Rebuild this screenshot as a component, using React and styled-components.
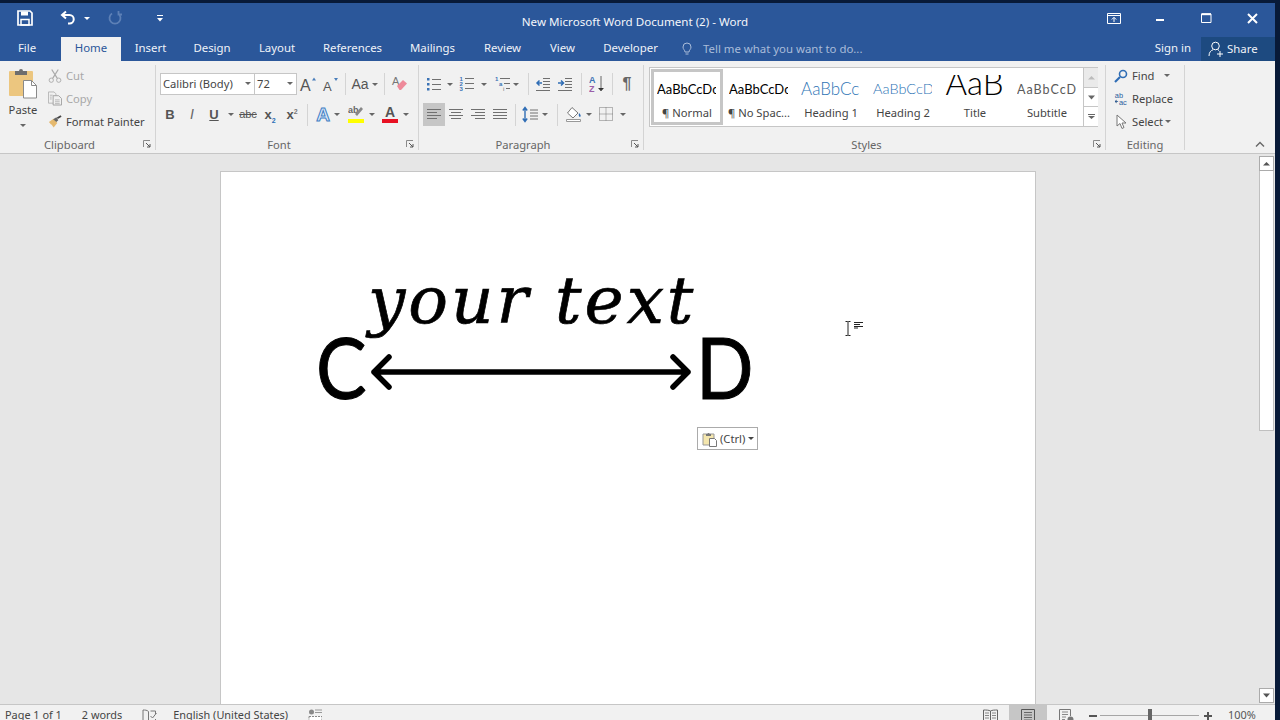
import React from "react";
import styled, { createGlobalStyle } from "styled-components";

const Global = createGlobalStyle`
  html, body {
    margin: 0;
    height: 100%;
    overflow: hidden;
    background: #081a38;
  }
  #root {
    height: 100%;
  }
`;

const UI = `"Noto Sans", "Open Sans", sans-serif`;

const Screen = styled.div`
  width: 1280px;
  height: 720px;
  padding: 3px 5px 0 0;
  box-sizing: border-box;
  overflow: hidden;
  font-family: ${UI};
`;
const Win = styled.div`
  display: flex;
  flex-direction: column;
  width: 1275px;
  height: 739px;
`;

/* title bar */
const TitleBar = styled.div`
  display: grid;
  grid-template-columns: 1fr auto 1fr;
  height: 34px;
  background: #2b579a;
  color: #fff;
`;
const Qat = styled.div`
  display: flex;
  align-items: center;
  height: 30px;
  padding-left: 14px;
`;
const DocTitle = styled.div`
  margin-right: 5px;
  font-size: 11.6px;
  line-height: 37px;
  color: #f4f6fa;
`;
const WinButtons = styled.div`
  display: flex;
  justify-content: flex-end;
  height: 30px;
`;
const WinBtn = styled.div`
  display: flex;
  align-items: center;
  justify-content: center;
  width: ${(p) => p.$w || 46}px;
`;

/* tabs */
const TabRow = styled.div`
  display: flex;
  height: 24px;
  background: #2b579a;
  font-size: 11.4px;
  line-height: 22px;
  color: #f0f3f8;
`;
const Tab = styled.div`
  width: ${(p) => p.$w}px;
  margin-right: ${(p) => p.$mr || 0}px;
  text-align: center;
  background: ${(p) => (p.$on ? "#f1f1f1" : "transparent")};
  color: ${(p) => (p.$on ? "#2b579a" : "inherit")};
`;
const TellMe = styled.div`
  display: flex;
  align-items: center;
  gap: 11px;
  margin-left: 11px;
  color: #a9bcd9;
`;
const SignIn = styled.div`
  margin-left: auto;
  margin-right: 10px;
`;
const ShareBtn = styled.div`
  display: flex;
  align-items: center;
  gap: 3px;
  width: 74px;
  padding-left: 7px;
  box-sizing: border-box;
  background: #1d4a80;
`;

/* ribbon */
const Ribbon = styled.div`
  display: flex;
  height: 93px;
  box-sizing: border-box;
  padding-top: 4px;
  background: #f1f1f1;
  border-bottom: 1px solid #c6c6c6;
  font-size: 11.2px;
  color: #444;
`;
const Group = styled.div`
  display: flex;
  flex-direction: column;
  flex: none;
  width: ${(p) => p.$w}px;
  height: 85px;
  box-sizing: border-box;
  border-right: 1px solid #d4d4d4;
`;
const GroupBody = styled.div`
  display: flex;
  height: 72px;
  flex: none;
  box-sizing: border-box;
`;
const GroupFoot = styled.div`
  display: flex;
  align-items: center;
  height: 14px;
  color: #666;
`;
const FootLabel = styled.div`
  flex: 1;
  text-align: center;
`;
const Launcher = styled.div`
  display: flex;
  justify-content: center;
  width: 16px;
`;
const Collapse = styled.div`
  margin-left: auto;
  margin-right: 10px;
  align-self: flex-end;
  padding-bottom: 2px;
`;
const PasteCol = styled.div`
  display: flex;
  flex-direction: column;
  align-items: center;
  width: 46px;
  flex: none;
  padding-top: 2px;
  margin-right: 2px;
`;
const PasteLabel = styled.div`
  margin-top: 3px;
  line-height: 16px;
`;
const SmallCol = styled.div`
  display: flex;
  flex-direction: column;
  margin-top: -1px;
  margin-left: ${(p) => p.$ml || 0}px;
`;
const SmallBtn = styled.div`
  display: flex;
  align-items: center;
  gap: 4px;
  height: 23px;
  white-space: nowrap;
  color: ${(p) => (p.$off ? "#a8a8a8" : "inherit")};
`;
const IconBox = styled.span`
  display: flex;
  justify-content: center;
  width: 14px;
`;
const Rows = styled.div`
  display: flex;
  flex-direction: column;
  gap: 8px;
  padding: 8px 0 0 ${(p) => p.$l}px;
`;
const Row = styled.div`
  display: flex;
  align-items: center;
  height: ${(p) => p.$h || 22}px;
  margin-left: ${(p) => p.$ml || 0}px;
`;
const Combo = styled.div`
  display: flex;
  align-items: center;
  width: ${(p) => p.$w}px;
  height: 22px;
  margin-right: ${(p) => p.$mr || 0}px;
  padding: 0 0 2px 2px;
  box-sizing: border-box;
  background: #fff;
  border: 1px solid #c6c6c6;
  font-size: 11.2px;
  color: #444;
`;
const ComboText = styled.span`
  flex: 1;
`;
const Tool = styled.div`
  display: flex;
  align-items: center;
  justify-content: center;
  flex: none;
  width: ${(p) => p.$w || 22}px;
  height: 100%;
  margin-left: ${(p) => p.$ml || 0}px;
  padding-bottom: 1px;
  box-sizing: border-box;
  background: ${(p) => (p.$on ? "#c6c6c6" : "transparent")};
  color: #555;
`;
const Caret = styled.i`
  display: flex;
  align-items: center;
  justify-content: center;
  flex: none;
  width: ${(p) => p.$w || 10}px;
  margin: ${(p) => p.$mt || 0}px ${(p) => p.$after || 0}px 0 ${(p) => p.$ml || 0}px;
  height: 6px;
  &::after {
    content: "";
    border: 3px solid transparent;
    border-bottom: 0;
    border-top-color: ${(p) => p.$color || "#666"};
  }
`;
const Sep = styled.div`
  flex: none;
  width: 1px;
  height: 22px;
  margin: 0 ${(p) => p.$r}px 0 ${(p) => p.$l}px;
  background: #d4d4d4;
`;
const Glyph = styled.span`
  font-family: "Liberation Sans", sans-serif;
  font-size: ${(p) => p.$size || 13}px;
  font-weight: ${(p) => p.$weight || 400};
  font-style: ${(p) => (p.$italic ? "italic" : "normal")};
  text-decoration: ${(p) => p.$deco || "none"};
  color: ${(p) => p.$color || "#555"};
  line-height: 1;
`;
const Tiny = styled.sup`
  font-size: 7px;
  color: ${(p) => p.$color || "#2b6fb8"};
  vertical-align: ${(p) => p.$align || "baseline"};
  line-height: 0;
`;
const OutlineA = styled.span`
  font-family: "Liberation Sans", sans-serif;
  font-size: 19px;
  font-weight: 700;
  color: #dceafa;
  -webkit-text-stroke: 1px #3f7fc4;
  line-height: 1;
`;
const BarLetter = styled.div`
  display: flex;
  flex-direction: column;
  align-items: center;
  width: 16px;
  font-family: "Liberation Sans", sans-serif;
  font-size: ${(p) => p.$size || 14}px;
  font-weight: 700;
  line-height: 13px;
  color: #555;
  &::after {
    content: "";
    width: 16px;
    height: 4px;
    background: ${(p) => p.$bar};
  }
`;

/* style gallery */
const Gallery = styled.div`
  display: flex;
  width: 449px;
  height: 60px;
  margin: 2px 0 0 5px;
  box-sizing: border-box;
  padding: 1px 0 1px 1px;
  background: #fff;
  border: 1px solid #c6c6c6;
`;
const StyleTile = styled.div`
  display: flex;
  flex-direction: column;
  width: 72px;
  flex: none;
  box-sizing: border-box;
  border: 3px solid ${(p) => (p.$on ? "#c6c6c6" : "transparent")};
`;
const Sample = styled.div`
  display: flex;
  align-items: flex-end;
  justify-content: ${(p) => (p.$clip ? "flex-start" : "center")};
  height: 25px;
  margin: 3px 4px 0 3px;
  padding-bottom: ${(p) => (p.$pad === undefined ? 4 : p.$pad)}px;
  box-sizing: border-box;
  overflow: hidden;
  white-space: nowrap;
  font-family: Lato, sans-serif;
  font-size: ${(p) => p.$size || 13}px;
  font-weight: ${(p) => p.$weight || 400};
  letter-spacing: ${(p) => p.$ls || 0}px;
  line-height: 1;
  color: ${(p) => p.$color || "#000"};
`;
const TileLabel = styled.div`
  margin-top: 5px;
  text-align: center;
  white-space: nowrap;
  line-height: 16px;
`;
const GalleryScroll = styled.div`
  display: flex;
  flex-direction: column;
  width: 15px;
  flex: none;
  margin: -1px 0;
`;
const GalleryBtn = styled.div`
  display: flex;
  align-items: center;
  justify-content: center;
  flex: 1;
  border-left: 1px solid #c6c6c6;
  border-top: ${(p) => (p.$first ? "0" : "1px solid #c6c6c6")};
  background: ${(p) => (p.$off ? "#eaeaea" : "#fff")};
`;

/* document area */
const DocArea = styled.div`
  display: flex;
  height: 550px;
  background: #e6e6e6;
`;
const Canvas = styled.div`
  flex: 1;
  padding: 17px 0 0 220px;
  overflow: hidden;
`;
const Page = styled.div`
  position: relative;
  width: 816px;
  height: 900px;
  box-sizing: border-box;
  padding: 95px 0 0 95px;
  background: #fff;
  border: 1px solid #c6c6c6;
`;
const Equation = styled.div`
  display: grid;
  grid-template-columns: 54px 326px auto;
  grid-template-rows: 62px 86px;
  color: #000;
`;
const OverText = styled.div`
  grid-column: 2;
  margin: 3px 0 0 -2px;
  font-family: "DejaVu Serif", serif;
  font-style: italic;
  font-size: 66px;
  letter-spacing: 3px;
  line-height: 62px;
  white-space: nowrap;
  -webkit-text-stroke: 0.7px #000;
`;
const Letter = styled.div`
  grid-row: 2;
  margin-top: -6px;
  font-family: Lato, sans-serif;
  font-size: 86px;
  line-height: 86px;
  -webkit-text-stroke: 1px #000;
  transform: scaleX(0.88);
  transform-origin: left center;
`;
const ArrowCell = styled.div`
  grid-row: 2;
  display: flex;
  align-items: center;
`;
const PasteTag = styled.div`
  position: absolute;
  left: 476px;
  top: 255px;
  display: flex;
  align-items: center;
  width: 61px;
  height: 23px;
  padding-left: 4px;
  box-sizing: border-box;
  background: #fff;
  border: 1px solid #ababab;
  font-size: 11.2px;
  color: #444;
  gap: 2px;
`;
const Pointer = styled.div`
  position: absolute;
  left: 624px;
  top: 148px;
`;
const Scrollbar = styled.div`
  display: flex;
  flex-direction: column;
  width: 16px;
  flex: none;
  padding: 2px 1px 1px 0;
  box-sizing: border-box;
`;
const ScrollBtn = styled.div`
  display: flex;
  align-items: center;
  justify-content: center;
  height: 15px;
  box-sizing: border-box;
  background: #fff;
  border: 1px solid #ababab;
`;
const Thumb = styled.div`
  height: 260px;
  box-sizing: border-box;
  background: #fff;
  border: 1px solid #c0c0c0;
  border-top: 0;
`;
const Track = styled.div`
  flex: 1;
`;

/* status bar */
const StatusBar = styled.div`
  display: flex;
  align-items: flex-start;
  height: 22px;
  box-sizing: border-box;
  border-top: 1px solid #c6c6c6;
  background: #f1f1f1;
  font-size: 10.9px;
  line-height: 19px;
  color: #444;
`;
const StatusText = styled.div`
  margin-left: ${(p) => p.$ml}px;
  white-space: nowrap;
`;
const StatusIcon = styled.div`
  display: flex;
  align-items: center;
  justify-content: center;
  width: ${(p) => p.$w || 38}px;
  height: 22px;
  margin-left: ${(p) => p.$ml || 0}px;
  background: ${(p) => (p.$on ? "#c6c6c6" : "transparent")};
`;
const ZoomWrap = styled.div`
  display: flex;
  align-items: center;
  height: 21px;
  margin-left: 4px;
  color: #555;
`;
const ZoomLine = styled.div`
  position: relative;
  width: 99px;
  height: 1px;
  margin: 0 5px 0 3px;
  background: #a6a6a6;
  &::after {
    content: "";
    position: absolute;
    left: 48px;
    top: -6px;
    width: 4px;
    height: 13px;
    background: #666;
  }
`;
const ZoomMark = styled.div`
  width: 8px;
  height: 2px;
  background: #555;
`;
const ZoomPlus = styled(ZoomMark)`
  position: relative;
  &::after {
    content: "";
    position: absolute;
    left: 3px;
    top: -3px;
    width: 2px;
    height: 8px;
    background: #555;
  }
`;
const ZoomPct = styled.div`
  margin-left: 16px;
  line-height: 19px;
  margin-top: -2px;
`;

/* drawings */
const Svg = ({ w = 16, h = 16, children }) => (
  <svg width={w} height={h} viewBox={`0 0 ${w} ${h}`} fill="none">
    {children}
  </svg>
);

const SaveIcon = () => (
  <Svg>
    <path d="M1 1h12l2 2v12H1z" stroke="#fff" strokeWidth="1.7" />
    <path d="M4 1.5h7v4H4z" fill="#fff" />
    <path d="M4 9.5h8V15H4z" stroke="#fff" strokeWidth="1.5" />
  </Svg>
);
const UndoIcon = () => (
  <Svg>
    <path
      d="M6 1.5 2 5l4 3.5M2 5h7.5a4 4 0 0 1 0 8.5H8"
      stroke="#fff"
      strokeWidth="2"
    />
  </Svg>
);
const RedoIcon = () => (
  <Svg>
    <path
      d="M5 3.5a5.5 5.5 0 1 0 6 0M11.5 1v3.5H15"
      stroke="#5d80b6"
      strokeWidth="1.8"
    />
  </Svg>
);
const QatIcon = () => (
  <Svg w={8} h={8}>
    <path d="M1 1h6v1H1z" fill="#fff" />
    <path d="M1 4h6L4 7.5z" fill="#fff" />
  </Svg>
);
const RibbonOptIcon = () => (
  <Svg w={14} h={11}>
    <path d="M.5.5h13v10H.5z" stroke="#fff" />
    <path d="M.5 2.5h13" stroke="#fff" />
    <path d="M7 9V4.5M4.8 6.5 7 4.3l2.2 2.2" stroke="#fff" />
  </Svg>
);
const MinIcon = () => (
  <Svg w={10} h={12}>
    <path d="M1 8h8" stroke="#fff" strokeWidth="2" />
  </Svg>
);
const MaxIcon = () => (
  <Svg w={11} h={10}>
    <path d="M.5 1h9.5v8.5H.5z" stroke="#fff" />
    <path d="M.5 1.2h9.5" stroke="#fff" strokeWidth="2" />
  </Svg>
);
const CloseIcon = () => (
  <Svg w={11} h={11}>
    <path d="m1 1 9 9M10 1l-9 9" stroke="#fff" strokeWidth="2" />
  </Svg>
);
const BulbIcon = () => (
  <Svg w={10} h={14}>
    <path
      d="M3 10C3 8 1 7.5 1 5a4 4 0 0 1 8 0c0 2.5-2 3-2 5z"
      stroke="#a9bcd9"
    />
    <path d="M3.5 12h3" stroke="#a9bcd9" />
  </Svg>
);
const PersonIcon = () => (
  <Svg>
    <circle cx="7.5" cy="5" r="3.8" stroke="#fff" />
    <path d="M1 15c0-4 2-5.5 4-6.2M9.5 8.5 11 9.5" stroke="#fff" />
    <path d="M9 13h6M12 10v6" stroke="#fff" />
  </Svg>
);
const PasteIcon = () => (
  <Svg w={30} h={32}>
    <path d="M1 5a1 1 0 0 1 1-1h22a1 1 0 0 1 1 1v24H2a1 1 0 0 1-1-1z" fill="#ecc67f" />
    <path d="M7 4h4a2 2 0 0 1 4 0h4v4H7z" fill="#6d6d6d" />
    <path d="M15.5 13.5h8l5 5v12.5h-13z" fill="#fff" stroke="#8a8a8a" />
    <path d="M23.5 13.5v5h5" stroke="#8a8a8a" />
  </Svg>
);
const CutIcon = () => (
  <Svg w={15} h={16}>
    <circle cx="3.5" cy="12.5" r="2.3" stroke="#aaa" />
    <circle cx="11.5" cy="12.5" r="2.3" stroke="#aaa" />
    <path d="M5 10.5 11 1M10 10.5 4 1" stroke="#aaa" strokeWidth="1.3" />
  </Svg>
);
const CopyIcon = () => (
  <Svg w={15} h={15}>
    <path d="M.5.5h6l2 2v10H.5z" stroke="#b5b5b5" fill="#f1f1f1" />
    <path d="M5.5 4.5h6l3 3v7h-9z" stroke="#a0a0a0" fill="#f1f1f1" />
    <path d="M7.5 9h5M7.5 11h5M7.5 13h5M2 4h3M2 6h2M2 8h2" stroke="#b5b5b5" />
  </Svg>
);
const BrushIcon = () => (
  <Svg w={15} h={14}>
    <path d="M1 7 6 3.5 10 8 6 13 4 10 3 9.5z" fill="#e5b96f" />
    <path d="M5.5 4 9 2l2 3-2 2z" fill="#666" />
    <path d="m10 3 4-2.500" stroke="#444" strokeWidth="2" />
  </Svg>
);
const GrowIcon = ({ big }) => (
  <svg width="18" height="18" viewBox="0 0 18 18">
    <text
      x={big ? 1 : 2}
      y="16"
      fontFamily="Liberation Sans"
      fontSize={big ? 16 : 13}
      fill="#555"
    >
      A
    </text>
    <path d={big ? "M13 5.500h4L15 2.500z" : "M13 3h4l-2 3z"} fill="#4a7ebb" />
  </svg>
);
const EraserIcon = () => (
  <svg width="18" height="18" viewBox="0 0 18 18">
    <text x="1" y="10" fontFamily="Liberation Sans" fontSize="11" fill="#777">
      A
    </text>
    <path d="m6 11 6-6 4 3.500-6 6.500H8.500z" fill="#ee8a9a" />
  </svg>
);
const HighlightIcon = () => (
  <svg width="16" height="14" viewBox="0 0 16 14">
    <text x="0" y="8" fontFamily="Liberation Sans" fontSize="9" fill="#666">
      ab
    </text>
    <path d="m7 9 6-7 2 2-6 7z" fill="#888" />
  </svg>
);
const LaunchIcon = () => (
  <Svg w={8} h={8}>
    <path d="M.5 7V.5H7" stroke="#8a8a8a" />
    <path d="M3 3l4 4M7 4v3H4" stroke="#555" />
  </Svg>
);
const ChevronUp = () => (
  <Svg w={10} h={7}>
    <path d="M1 5.500 5 1.500l4 4" stroke="#666" strokeWidth="1.4" />
  </Svg>
);
const Lines = ({ spec }) => (
  <Svg>
    {spec.map(([a, b], i) => (
      <path key={i} d={`M${a} ${3.5 + i * 3}H${b}`} stroke="#707070" />
    ))}
  </Svg>
);
const BulletsIcon = () => (
  <Svg>
    {[3, 8, 13].map((y) => (
      <React.Fragment key={y}>
        <rect x="1" y={y - 1} width="2.500" height="2.500" fill="#3b73b5" />
        <path d={`M6 ${y + 0.5}h9`} stroke="#707070" />
      </React.Fragment>
    ))}
  </Svg>
);
const NumberIcon = () => (
  <Svg>
    {[1, 2, 3].map((n) => (
      <React.Fragment key={n}>
        <text x="0.500" y={n * 5} fontSize="6" fontFamily="Liberation Sans" fontWeight="700" fill="#3b73b5">
          {n}
        </text>
        <path d={`M6 ${n * 5 - 2.5}h9`} stroke="#707070" />
      </React.Fragment>
    ))}
  </Svg>
);
const MultiIcon = () => (
  <Svg>
    <text x="0" y="5" fontSize="6" fontFamily="Liberation Sans" fontWeight="700" fill="#3b73b5">1</text>
    <text x="4" y="10" fontSize="6" fontFamily="Liberation Sans" fontWeight="700" fill="#3b73b5">a</text>
    <text x="8" y="15" fontSize="6" fontFamily="Liberation Sans" fill="#707070">i</text>
    <path d="M5 2.500h10M9 7.500h6M11 12.500h4" stroke="#707070" />
  </Svg>
);
const IndentIcon = ({ more }) => (
  <Svg>
    <path d="M8 2.500h7M8 5.500h7M8 8.500h7M8 11.500h7M1 14.500h14" stroke="#707070" />
    <path
      d={more ? "M1 7h5M4 4.500 6.500 7 4 9.500" : "M7 7H2M4.500 4.500 2 7l2.500 2.500"}
      stroke="#2f6db5"
      strokeWidth="1.500"
    />
  </Svg>
);
const SortIcon = () => (
  <svg width="16" height="18" viewBox="0 0 16 18">
    <text x="0" y="8" fontSize="9" fontFamily="Liberation Sans" fontWeight="700" fill="#3b73b5">A</text>
    <text x="0" y="17" fontSize="9" fontFamily="Liberation Sans" fontWeight="700" fill="#9b5ea8">Z</text>
    <path d="M12 1v15M9.500 13l2.500 3 2.500-3" stroke="#666" />
  </svg>
);
const SpacingIcon = () => (
  <Svg w={16} h={17}>
    <path d="M3 2v13M.8 4.500 3 1.500l2.200 3M.8 12.500 3 15.500l2.200-3" stroke="#2f6db5" strokeWidth="1.400" />
    <path d="M8 4h8M8 7h8M8 10h8M8 13h8" stroke="#707070" />
  </Svg>
);
const BucketIcon = () => (
  <Svg w={17} h={16}>
    <path d="M7 1.500 13 7l-5 5-5.500-5z" fill="#fff" stroke="#777" />
    <path d="M14 7c1.500 1.500 2 2.500 1.500 3.500S13 10.500 14 7" fill="#2f6db5" />
    <path d="M1.500 13.500h14v2h-14z" fill="#fff" stroke="#999" />
  </Svg>
);
const BordersIcon = () => (
  <Svg w={14} h={14}>
    <path
      d="M.5.500h13v13H.5zM7 .500v13M.5 7h13"
      stroke="#777"
      strokeDasharray="1 1"
    />
  </Svg>
);
const FindIcon = () => (
  <Svg w={14} h={14}>
    <circle cx="9" cy="5" r="3.500" stroke="#2f6db5" strokeWidth="1.600" />
    <path d="M6 8 1 13" stroke="#2f6db5" strokeWidth="2.200" />
  </Svg>
);
const ReplaceIcon = () => (
  <svg width="17" height="16" viewBox="0 0 17 16">
    <text x="1" y="7" fontSize="9" fontFamily="Liberation Sans" fill="#2b5f9e">ab</text>
    <text x="6" y="15" fontSize="9" fontFamily="Liberation Sans" fill="#2b5f9e">ac</text>
    <path d="M5 11H1.500M3 9.500 1.200 11 3 12.500" stroke="#2b5f9e" />
  </svg>
);
const SelectIcon = () => (
  <Svg w={11} h={16}>
    <path d="M1 1v11l3-2.500 2 5 2-1-2-4.500h4z" stroke="#777" fill="#fff" />
  </Svg>
);
const MiniArrow = ({ d, fill = "#777" }) => (
  <Svg w={7} h={5}>
    <path d={d} fill={fill} />
  </Svg>
);
const BigArrow = () => (
  <svg width="324" height="36" viewBox="0 0 324 36" fill="none">
    <path
      d="M4 18h314M19 3 4 18l15 15M303 3l15 15-15 15"
      stroke="#000"
      strokeWidth="5.500"
      strokeLinecap="round"
      strokeLinejoin="round"
    />
  </svg>
);
const PasteTagIcon = () => (
  <Svg w={16} h={16}>
    <path d="M1 3h11v11H1z" fill="#f4e6ad" stroke="#999" />
    <path d="M4 3h1.500a1 1 0 0 1 2 0H9v2H4z" fill="#777" />
    <path d="M7.500 7.500h5l2 2v6h-7z" fill="#fff" stroke="#777" />
  </Svg>
);
const CursorIcon = () => (
  <Svg w={20} h={17}>
    <path d="M.5 1.500h2l.5.500.5-.500h2M.5 15.500h2l.5-.500.5.500h2M3 2v13" stroke="#222" />
    <path d="M9 2.500h9M9 4.500h6M9 6.500h9M9 8h4" stroke="#222" />
  </Svg>
);
const ProofIcon = () => (
  <Svg w={15} h={14}>
    <path d="M6.500 2.500C5 1 3 1 1 1v11c2 0 4 0 5.500 1.500zM8.500 2h5v3M13.500 10v3.500h-5" stroke="#777" />
    <path d="m8.500 7 2 2 4-5" stroke="#777" />
  </Svg>
);
const MacroIcon = () => (
  <Svg w={14} h={14}>
    <circle cx="3.500" cy="3" r="2.500" fill="#888" />
    <path d="M7 1h7M7 3.500h7" stroke="#999" />
    <path d="M1 7.500h13v6H1z" fill="#fff" stroke="#888" strokeDasharray="2 1" />
  </Svg>
);
const ReadIcon = () => (
  <Svg w={15} h={14}>
    <path d="M7.500 2C6 1 3 1 .5 1v11c2.500 0 5.500 0 7 1 1.500-1 4.500-1 7-1V1c-2.500 0-5.500 0-7 1zM7.500 2v11" stroke="#666" />
    <path d="M2 4h4M2 6.500h4M2 9h4M9 4h4M9 6.500h4M9 9h4" stroke="#888" />
  </Svg>
);
const PrintIcon = () => (
  <Svg w={14} h={14}>
    <path d="M.5.500h13v13H.5z" stroke="#555" />
    <path d="M3 3.500h8M3 6h8M3 8.500h8M3 11h8" stroke="#666" />
  </Svg>
);
const WebIcon = () => (
  <Svg w={15} h={14}>
    <path d="M8 13.500H.5V.500h11V7" stroke="#777" />
    <path d="M3 3h6M3 5.500h6M3 8h4M3 10.500h3" stroke="#888" />
    <circle cx="11.500" cy="10.500" r="3" fill="#777" />
  </Svg>
);

const tabs = [
  ["Home", 60, true],
  ["Insert", 59],
  ["Design", 64],
  ["Layout", 66],
  ["References", 85],
  ["Mailings", 75],
  ["Review", 65],
  ["View", 55],
  ["Developer", 81],
];

const tiles = [
  { name: "¶ Normal", sample: "AaBbCcDc", on: true, clip: true },
  { name: "¶ No Spac...", sample: "AaBbCcDc", clip: true },
  { name: "Heading 1", sample: "AaBbCc", size: 17, color: "#2e74b5", weight: 300, pad: 3, clip: true },
  { name: "Heading 2", sample: "AaBbCcD", size: 14.5, color: "#2e74b5", weight: 300, clip: true },
  { name: "Title", sample: "AaB", size: 33, weight: 300, pad: 1 },
  { name: "Subtitle", sample: "AaBbCcD", size: 12.5, color: "#5a5a5a", ls: 1, clip: true },
];

const leftLines = [[1, 15], [1, 11], [1, 15], [1, 11]];
const centerLines = [[1, 15], [3, 13], [1, 15], [3, 13]];
const rightLines = [[1, 15], [5, 15], [1, 15], [5, 15]];
const fullLines = [[1, 15], [1, 15], [1, 15], [1, 15]];

export default function App() {
  return (
    <Screen>
      <Global />
      <Win>
        <TitleBar>
          <Qat>
            <Tool><SaveIcon /></Tool>
            <Tool $ml={21}><UndoIcon /></Tool>
            <Caret $w={16} $after={9} $color="#fff" />
            <Tool><RedoIcon /></Tool>
            <Tool $ml={23}><QatIcon /></Tool>
          </Qat>
          <DocTitle>New Microsoft Word Document (2) - Word</DocTitle>
          <WinButtons>
            <WinBtn><RibbonOptIcon /></WinBtn>
            <WinBtn><MinIcon /></WinBtn>
            <WinBtn><MaxIcon /></WinBtn>
            <WinBtn><CloseIcon /></WinBtn>
          </WinButtons>
        </TitleBar>

        <TabRow>
          <Tab $w={54} $mr={7}>File</Tab>
          {tabs.map(([name, w, on]) => (
            <Tab key={name} $w={w} $on={on}>{name}</Tab>
          ))}
          <TellMe>
            <BulbIcon />
            Tell me what you want to do...
          </TellMe>
          <SignIn>Sign in</SignIn>
          <ShareBtn>
            <PersonIcon />
            Share
          </ShareBtn>
        </TabRow>

        <Ribbon>
          <Group $w={156}>
            <GroupBody>
              <PasteCol>
                <PasteIcon />
                <PasteLabel>Paste</PasteLabel>
                <Caret $mt={4} />
              </PasteCol>
              <SmallCol>
                <SmallBtn $off><IconBox><CutIcon /></IconBox>Cut</SmallBtn>
                <SmallBtn $off><IconBox><CopyIcon /></IconBox>Copy</SmallBtn>
                <SmallBtn><IconBox><BrushIcon /></IconBox>Format Painter</SmallBtn>
              </SmallCol>
            </GroupBody>
            <GroupFoot>
              <FootLabel>Clipboard</FootLabel>
              <Launcher><LaunchIcon /></Launcher>
            </GroupFoot>
          </Group>

          <Group $w={263}>
            <GroupBody>
              <Rows $l={4}>
                <Row>
                  <Combo $w={95} $mr={-1}>
                    <ComboText>Calibri (Body)</ComboText>
                    <Caret $w={13} />
                  </Combo>
                  <Combo $w={43}>
                    <ComboText>72</ComboText>
                    <Caret $w={13} />
                  </Combo>
                  <Tool><GrowIcon big /></Tool>
                  <Tool><GrowIcon /></Tool>
                  <Sep $l={4} $r={4} />
                  <Tool $w={20}><Glyph $size={14}>Aa</Glyph></Tool>
                  <Caret $w={10} $after={2} />
                  <Sep $l={2} $r={4} />
                  <Tool><EraserIcon /></Tool>
                </Row>
                <Row $h={23} $ml={-1}>
                  <Tool><Glyph $weight={700}>B</Glyph></Tool>
                  <Tool><Glyph $italic $size={14} $color="#666">I</Glyph></Tool>
                  <Tool><Glyph $weight={700} $deco="underline">U</Glyph></Tool>
                  <Caret $w={12} />
                  <Tool><Glyph $size={11} $deco="line-through">abc</Glyph></Tool>
                  <Tool><Glyph $weight={700}>x<Tiny $align="sub">2</Tiny></Glyph></Tool>
                  <Tool><Glyph $weight={700}>x<Tiny $align="super" $color="#777">2</Tiny></Glyph></Tool>
                  <Sep $l={4} $r={4} />
                  <Tool><OutlineA>A</OutlineA></Tool>
                  <Caret $w={6} $after={5} />
                  <Tool>
                    <BarLetter $bar="#ffff00" $size={1}><HighlightIcon /></BarLetter>
                  </Tool>
                  <Caret $w={10} $after={2} />
                  <Tool><BarLetter $bar="#e81123">A</BarLetter></Tool>
                  <Caret $w={10} />
                </Row>
              </Rows>
            </GroupBody>
            <GroupFoot>
              <FootLabel>Font</FootLabel>
              <Launcher><LaunchIcon /></Launcher>
            </GroupFoot>
          </Group>

          <Group $w={225}>
            <GroupBody>
              <Rows $l={4}>
                <Row>
                  <Tool><BulletsIcon /></Tool>
                  <Caret $w={10} $after={1} />
                  <Tool><NumberIcon /></Tool>
                  <Caret $w={12} $after={2} />
                  <Tool><MultiIcon /></Tool>
                  <Caret $w={4} $after={10} />
                  <Sep $l={0} $r={3} />
                  <Tool><IndentIcon /></Tool>
                  <Tool><IndentIcon more /></Tool>
                  <Sep $l={5} $r={4} />
                  <Tool><SortIcon /></Tool>
                  <Sep $l={4} $r={3} />
                  <Tool><Glyph $size={16} $weight={700} $color="#666">¶</Glyph></Tool>
                </Row>
                <Row $h={23}>
                  <Tool $on><Lines spec={leftLines} /></Tool>
                  <Tool><Lines spec={centerLines} /></Tool>
                  <Tool><Lines spec={rightLines} /></Tool>
                  <Tool><Lines spec={fullLines} /></Tool>
                  <Sep $l={4} $r={3} />
                  <Tool><SpacingIcon /></Tool>
                  <Caret $w={8} $after={8} />
                  <Sep $l={0} $r={4} />
                  <Tool><BucketIcon /></Tool>
                  <Caret $w={10} $after={1} />
                  <Tool><BordersIcon /></Tool>
                  <Caret $w={12} />
                </Row>
              </Rows>
            </GroupBody>
            <GroupFoot>
              <FootLabel>Paragraph</FootLabel>
              <Launcher><LaunchIcon /></Launcher>
            </GroupFoot>
          </Group>

          <Group $w={462}>
            <GroupBody>
              <Gallery>
                {tiles.map((t) => (
                  <StyleTile key={t.name} $on={t.on}>
                    <Sample $size={t.size} $color={t.color} $weight={t.weight} $ls={t.ls} $pad={t.pad} $clip={t.clip}>
                      {t.sample}
                    </Sample>
                    <TileLabel>{t.name}</TileLabel>
                  </StyleTile>
                ))}
                <GalleryScroll>
                  <GalleryBtn $first $off>
                    <MiniArrow d="M0 4.500h7L3.500 1z" fill="#bbb" />
                  </GalleryBtn>
                  <GalleryBtn>
                    <MiniArrow d="M0 .500h7L3.500 4.500z" fill="#666" />
                  </GalleryBtn>
                  <GalleryBtn>
                    <MiniArrow d="M0 0h7v1H0zM0 2h7L3.500 5z" fill="#666" />
                  </GalleryBtn>
                </GalleryScroll>
              </Gallery>
            </GroupBody>
            <GroupFoot>
              <FootLabel>Styles</FootLabel>
              <Launcher><LaunchIcon /></Launcher>
            </GroupFoot>
          </Group>

          <Group $w={79}>
            <GroupBody>
              <SmallCol $ml={8}>
                <SmallBtn>
                  <IconBox><FindIcon /></IconBox>
                  Find
                  <Caret $w={16} />
                </SmallBtn>
                <SmallBtn>
                  <IconBox><ReplaceIcon /></IconBox>
                  Replace
                </SmallBtn>
                <SmallBtn>
                  <IconBox><SelectIcon /></IconBox>
                  Select
                  <Caret $w={6} $ml={-2} />
                </SmallBtn>
              </SmallCol>
            </GroupBody>
            <GroupFoot>
              <FootLabel>Editing</FootLabel>
            </GroupFoot>
          </Group>

          <Collapse><ChevronUp /></Collapse>
        </Ribbon>

        <DocArea>
          <Canvas>
            <Page>
              <Equation>
                <OverText>your text</OverText>
                <Letter>C</Letter>
                <ArrowCell><BigArrow /></ArrowCell>
                <Letter>D</Letter>
              </Equation>
              <Pointer><CursorIcon /></Pointer>
              <PasteTag>
                <PasteTagIcon />
                (Ctrl)
                <Caret $w={7} $color="#444" />
              </PasteTag>
            </Page>
          </Canvas>
          <Scrollbar>
            <ScrollBtn><MiniArrow d="M0 4.500h7L3.500 1z" fill="#555" /></ScrollBtn>
            <Thumb />
            <Track />
            <ScrollBtn><MiniArrow d="M0 .500h7L3.500 4.500z" fill="#555" /></ScrollBtn>
          </Scrollbar>
        </DocArea>

        <StatusBar>
          <StatusText $ml={5}>Page 1 of 1</StatusText>
          <StatusText $ml={20}>2 words</StatusText>
          <StatusIcon $w={15} $ml={20}><ProofIcon /></StatusIcon>
          <StatusText $ml={16}>English (United States)</StatusText>
          <StatusIcon $w={14} $ml={20}><MacroIcon /></StatusIcon>
          <StatusIcon $ml={649}><ReadIcon /></StatusIcon>
          <StatusIcon $on><PrintIcon /></StatusIcon>
          <StatusIcon><WebIcon /></StatusIcon>
          <ZoomWrap>
            <ZoomMark />
            <ZoomLine />
            <ZoomPlus />
            <ZoomPct>100%</ZoomPct>
          </ZoomWrap>
        </StatusBar>
      </Win>
    </Screen>
  );
}
